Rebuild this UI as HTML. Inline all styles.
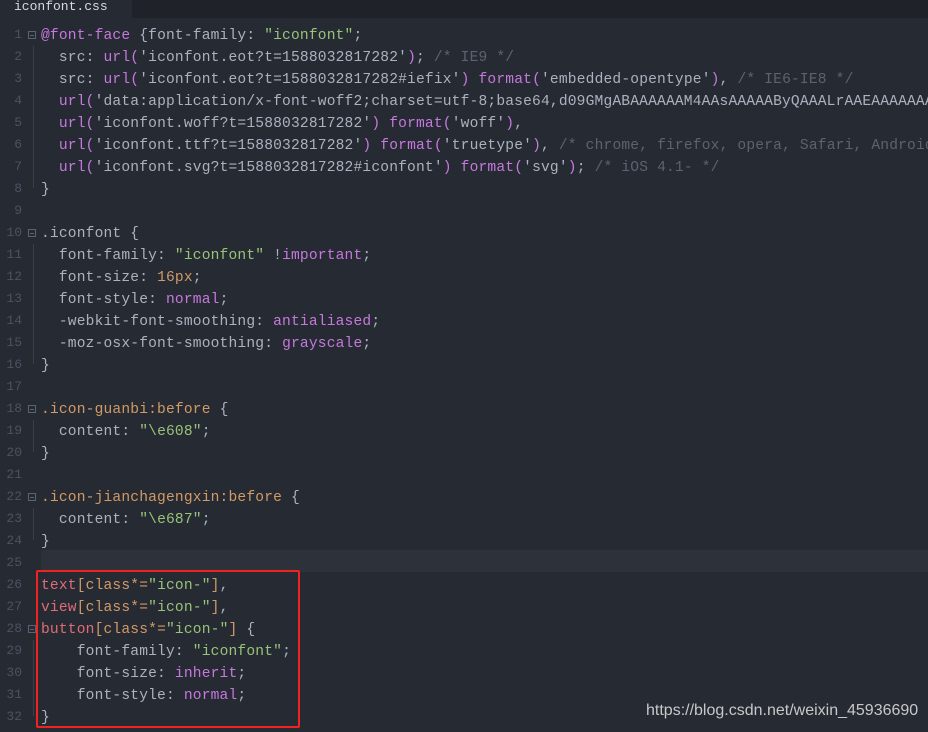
<!DOCTYPE html>
<html><head><meta charset="utf-8"><style>
html,body{margin:0;padding:0}
body{width:928px;height:732px;background:#262a33;position:relative;overflow:hidden;font-family:"Liberation Mono",monospace;font-size:14.6px;letter-spacing:0.17px;color:#abb2bf}
.tabbar{position:absolute;left:0;top:0;width:928px;height:18px;background:#1f2228}
.tab{position:absolute;left:0;top:0;width:132px;height:18px;background:#262a33;color:#d7dae0;font-size:13px;line-height:13px;padding-left:14px;box-sizing:border-box;letter-spacing:0}
.ln{position:absolute;left:0;width:22px;text-align:right;color:#4b5263;font-size:13px;height:22px;line-height:22px;letter-spacing:0}
.cl{position:absolute;left:41px;white-space:pre;height:22px;line-height:22px;top:1px}
.fold{position:absolute;left:28px;width:8px;height:8px;border:1px solid #5c6370;box-sizing:border-box}
.fold:after{content:"";position:absolute;left:1px;top:3px;width:4px;height:1px;background:#5c6370}
.gl{position:absolute;left:33px;width:1px;background:#3a3f4a}
.p{color:#c678dd}.g{color:#98c379}.c{color:#5c6370}.o{color:#d19a66}.r{color:#e06c75}
.cur{position:absolute;left:41px;top:550px;width:887px;height:22px;background:#2c313a}
.box{position:absolute;left:36px;top:570px;width:264px;height:158px;border:2px solid #f0231e;border-radius:2px;box-sizing:border-box}
.wm{position:absolute;left:646px;top:702px;font-family:"Liberation Sans",sans-serif;font-size:16px;letter-spacing:0;color:#c8c8c8}
</style></head><body>
<div class="tabbar"><div class="tab">iconfont.css</div></div>
<div class="cur"></div>
<div class="gl" style="top:46px;height:142px"></div>
<div class="gl" style="top:244px;height:120px"></div>
<div class="gl" style="top:420px;height:32px"></div>
<div class="gl" style="top:508px;height:32px"></div>
<div class="gl" style="top:640px;height:76px"></div>
<div class="fold" style="top:31px"></div>
<div class="fold" style="top:229px"></div>
<div class="fold" style="top:405px"></div>
<div class="fold" style="top:493px"></div>
<div class="fold" style="top:625px"></div>

<div class="ln" style="top:24px">1</div><div class="cl" style="top:25px"><span class="p">@font-face</span> {font-family: <span class="g">"iconfont"</span>;</div>
<div class="ln" style="top:46px">2</div><div class="cl" style="top:47px">  src: <span class="p">url(</span>'iconfont.eot?t=1588032817282'<span class="p">)</span>; <span class="c">/* IE9 */</span></div>
<div class="ln" style="top:68px">3</div><div class="cl" style="top:69px">  src: <span class="p">url(</span>'iconfont.eot?t=1588032817282#iefix'<span class="p">)</span> <span class="p">format(</span>'embedded-opentype'<span class="p">)</span>, <span class="c">/* IE6-IE8 */</span></div>
<div class="ln" style="top:90px">4</div><div class="cl" style="top:91px">  <span class="p">url(</span>'data:application/x-font-woff2;charset=utf-8;base64,d09GMgABAAAAAAM4AAsAAAAAByQAAALrAAEAAAAAAAAAAA</div>
<div class="ln" style="top:112px">5</div><div class="cl" style="top:113px">  <span class="p">url(</span>'iconfont.woff?t=1588032817282'<span class="p">)</span> <span class="p">format(</span>'woff'<span class="p">)</span>,</div>
<div class="ln" style="top:134px">6</div><div class="cl" style="top:135px">  <span class="p">url(</span>'iconfont.ttf?t=1588032817282'<span class="p">)</span> <span class="p">format(</span>'truetype'<span class="p">)</span>, <span class="c">/* chrome, firefox, opera, Safari, Android</span></div>
<div class="ln" style="top:156px">7</div><div class="cl" style="top:157px">  <span class="p">url(</span>'iconfont.svg?t=1588032817282#iconfont'<span class="p">)</span> <span class="p">format(</span>'svg'<span class="p">)</span>; <span class="c">/* iOS 4.1- */</span></div>
<div class="ln" style="top:178px">8</div><div class="cl" style="top:179px">}</div>
<div class="ln" style="top:200px">9</div>
<div class="ln" style="top:222px">10</div><div class="cl" style="top:223px">.iconfont {</div>
<div class="ln" style="top:244px">11</div><div class="cl" style="top:245px">  font-family: <span class="g">"iconfont"</span> !<span class="p">important</span>;</div>
<div class="ln" style="top:266px">12</div><div class="cl" style="top:267px">  font-size: <span class="o">16px</span>;</div>
<div class="ln" style="top:288px">13</div><div class="cl" style="top:289px">  font-style: <span class="p">normal</span>;</div>
<div class="ln" style="top:310px">14</div><div class="cl" style="top:311px">  -webkit-font-smoothing: <span class="p">antialiased</span>;</div>
<div class="ln" style="top:332px">15</div><div class="cl" style="top:333px">  -moz-osx-font-smoothing: <span class="p">grayscale</span>;</div>
<div class="ln" style="top:354px">16</div><div class="cl" style="top:355px">}</div>
<div class="ln" style="top:376px">17</div>
<div class="ln" style="top:398px">18</div><div class="cl" style="top:399px"><span class="o">.icon-guanbi:before</span> {</div>
<div class="ln" style="top:420px">19</div><div class="cl" style="top:421px">  content: <span class="g">"\e608"</span>;</div>
<div class="ln" style="top:442px">20</div><div class="cl" style="top:443px">}</div>
<div class="ln" style="top:464px">21</div>
<div class="ln" style="top:486px">22</div><div class="cl" style="top:487px"><span class="o">.icon-jianchagengxin:before</span> {</div>
<div class="ln" style="top:508px">23</div><div class="cl" style="top:509px">  content: <span class="g">"\e687"</span>;</div>
<div class="ln" style="top:530px">24</div><div class="cl" style="top:531px">}</div>
<div class="ln" style="top:552px">25</div>
<div class="ln" style="top:574px">26</div><div class="cl" style="top:575px"><span class="r">text</span><span class="o">[class*=</span><span class="g">"icon-"</span><span class="o">]</span>,</div>
<div class="ln" style="top:596px">27</div><div class="cl" style="top:597px"><span class="r">view</span><span class="o">[class*=</span><span class="g">"icon-"</span><span class="o">]</span>,</div>
<div class="ln" style="top:618px">28</div><div class="cl" style="top:619px"><span class="r">button</span><span class="o">[class*=</span><span class="g">"icon-"</span><span class="o">]</span> {</div>
<div class="ln" style="top:640px">29</div><div class="cl" style="top:641px">    font-family: <span class="g">"iconfont"</span>;</div>
<div class="ln" style="top:662px">30</div><div class="cl" style="top:663px">    font-size: <span class="p">inherit</span>;</div>
<div class="ln" style="top:684px">31</div><div class="cl" style="top:685px">    font-style: <span class="p">normal</span>;</div>
<div class="ln" style="top:706px">32</div><div class="cl" style="top:707px">}</div>
<div class="box"></div>
<div class="wm">https://blog.csdn.net/weixin_45936690</div>
</body></html>
